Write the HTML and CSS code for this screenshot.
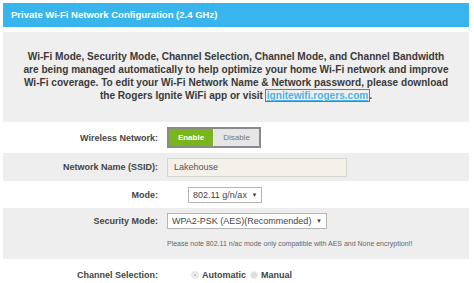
FILE: index.html
```html
<!DOCTYPE html>
<html lang="en">
<head>
    <meta charset="UTF-8">
    <title>Private Wi-Fi Network Configuration</title>
    <link rel="stylesheet" href="styles.css">
</head>
<body>
    <div class="page">
        <div class="title-bar">Private Wi-Fi Network Configuration (2.4 GHz)</div>

        <div class="notice">
            <p>Wi-Fi Mode, Security Mode, Channel Selection, Channel Mode, and Channel Bandwidth<br>
            are being managed automatically to help optimize your home Wi-Fi network and improve<br>
            Wi-Fi coverage. To edit your Wi-Fi Network Name &amp; Network password, please download<br>
            the Rogers Ignite WiFi app or visit <a class="link" href="#">ignitewifi.rogers.com</a>.</p>
        </div>

        <!-- Settings rows -->
        <div class="row r-wireless">
            <div class="label">Wireless Network:</div>
            <div class="field">
                <div class="toggle">
                    <span class="toggle-btn on">Enable</span>
                    <span class="toggle-btn">Disable</span>
                </div>
            </div>
        </div>

        <div class="row shaded r-ssid">
            <div class="label">Network Name (SSID):</div>
            <div class="field">
                <div class="text-input">Lakehouse</div>
            </div>
        </div>

        <div class="row r-mode">
            <div class="label">Mode:</div>
            <div class="field indent">
                <div class="select">802.11 g/n/ax <span class="arrow">▼</span></div>
            </div>
        </div>

        <div class="row shaded tall">
            <div class="label">Security Mode:</div>
            <div class="field stack">
                <div class="select">WPA2-PSK (AES)(Recommended) <span class="arrow">▼</span></div>
                <div class="note">Please note 802.11 n/ac mode only compatible with AES and None encryption!!</div>
            </div>
        </div>

        <div class="row r-channel">
            <div class="label">Channel Selection:</div>
            <div class="field indent radios">
                <label class="radio"><span class="dot checked"></span>Automatic</label>
                <label class="radio"><span class="dot"></span>Manual</label>
            </div>
        </div>
    </div>
</body>
</html>
```

FILE: styles.css
```css
* { margin: 0; padding: 0; box-sizing: border-box; }

body {
    font-family: 'Liberation Sans', Arial, sans-serif;
    background: white;
    color: #333;
    padding: 3px;
}

.page {
    width: 466px;
}

.title-bar {
    background: #38b5ec;
    color: white;
    font-weight: bold;
    font-size: 9.5px;
    height: 24px;
    line-height: 24px;
    padding-left: 8px;
    margin-bottom: 5px;
}

.notice {
    background: #efefef;
    height: 90px;
    padding-top: 18px;
    text-align: center;
}

.notice p {
    font-size: 10.1px;
    font-weight: bold;
    line-height: 13px;
    color: #3a3a3a;
    white-space: nowrap;
}

.link {
    color: #4fb3e6;
    outline: 1px solid #5a7da8;
    padding: 0 1px;
}

.row {
    display: flex;
    align-items: center;
    font-size: 9px;
}

.r-wireless { height: 31px; }
.r-ssid { height: 28px; }
.r-mode { height: 27px; }
.r-channel { height: 32px; }

.row.shaded {
    background: #eeeeee;
}

.row.tall {
    height: 51px;
    align-items: flex-start;
    padding-top: 5px;
}

.label {
    width: 155px;
    text-align: right;
    font-weight: bold;
    color: #444;
}

.field {
    padding-left: 9px;
    display: flex;
    align-items: center;
    gap: 10px;
}

.field.indent {
    padding-left: 30px;
}

.field.radios {
    padding-left: 33px;
    gap: 4px;
}

.field.stack {
    flex-direction: column;
    align-items: flex-start;
    gap: 11px;
}

.tall .label {
    padding-top: 3px;
}

.toggle {
    display: flex;
    border: 2px solid #8a8a8a;
}

.toggle-btn {
    width: 45px;
    height: 17px;
    line-height: 17px;
    text-align: center;
    font-size: 8px;
    background: #e6e6e6;
    color: #777;
}

.toggle-btn.on {
    background: #79b51c;
    color: white;
    font-weight: bold;
    border-right: 1px solid #eee;
}

.text-input {
    width: 180px;
    height: 19px;
    line-height: 17px;
    background: #f3f1ea;
    border: 1px solid #d8d6cf;
    padding-left: 6px;
    color: #555;
    font-size: 9px;
}

.select {
    height: 16px;
    line-height: 14px;
    border: 1px solid #b5b5b5;
    background: white;
    padding: 0 4px;
    color: #444;
    font-size: 9px;
}

.arrow {
    font-size: 6px;
    vertical-align: 1px;
    margin-left: 2px;
}

.note {
    font-size: 7px;
    color: #666;
}

.radio {
    display: flex;
    align-items: center;
    gap: 3px;
    font-weight: bold;
    color: #444;
}

.dot {
    width: 8px;
    height: 8px;
    border-radius: 50%;
    background: #ddd;
    border: 1px solid #eee;
}

.dot.checked {
    background: #bbb;
    box-shadow: inset 0 0 0 2px #eee;
}
```
